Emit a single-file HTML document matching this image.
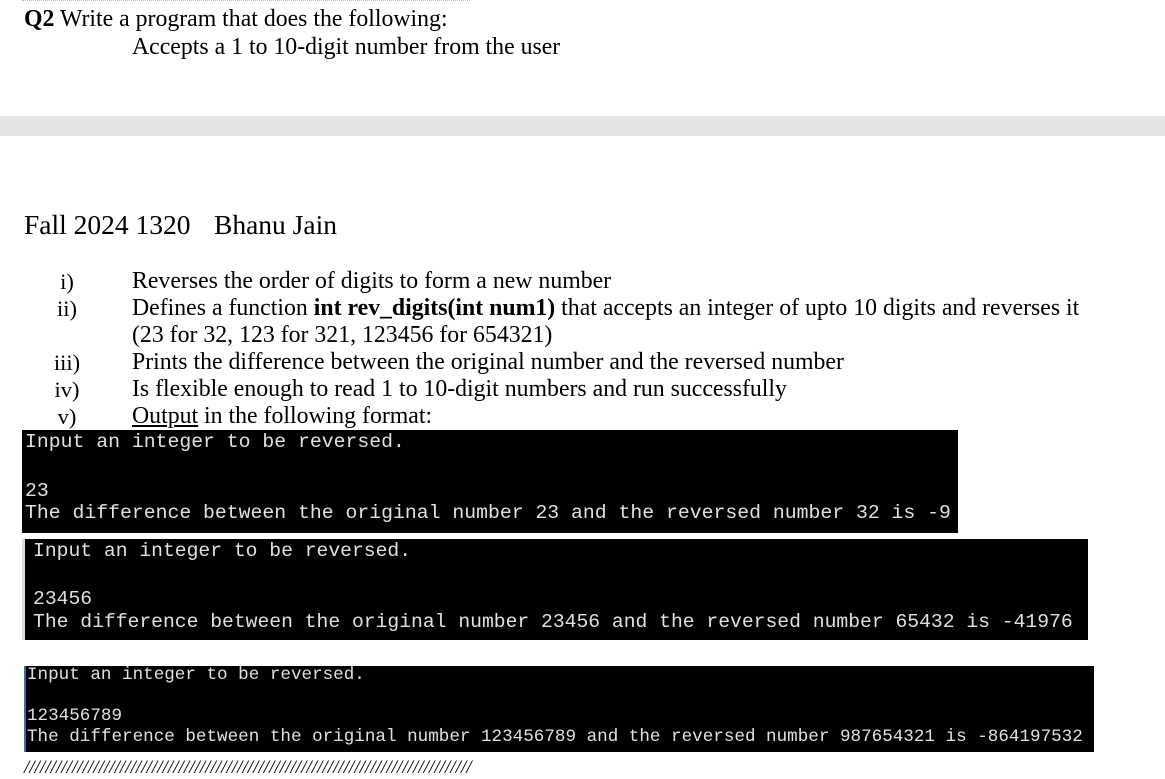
<!DOCTYPE html>
<html><head><meta charset="utf-8">
<style>
body{margin:0;width:1165px;height:779px;background:#fff;position:relative;overflow:hidden;font-family:"Liberation Serif",serif;color:#000}
.t{position:absolute;font-size:23.8px;line-height:23px;white-space:nowrap}
.n{position:absolute;width:40px;left:47px;text-align:center;font-size:22.5px;line-height:23px}
.box{position:absolute;background:#000;color:#e0e0e0;font-family:"Liberation Mono",monospace;white-space:pre}
.box div{position:absolute;left:0;white-space:pre}
</style></head><body>
<div style="position:absolute;left:22px;top:0;width:448px;border-top:1px dotted #bbb"></div>
<div class="t" style="left:24px;top:8px"><b>Q2</b> Write a program that does the following:</div>
<div class="t" style="left:132px;top:36px">Accepts a 1 to 10-digit number from the user</div>
<div style="position:absolute;left:0;top:116px;width:1165px;height:20px;background:#e3e3e3"></div>
<div class="t" style="left:24px;top:211px;font-size:27.5px;line-height:27px">Fall 2024 1320</div>
<div class="t" style="left:214px;top:211px;font-size:27.5px;line-height:27px">Bhanu Jain</div>
<div class="n" style="top:270px">i)</div><div class="t" style="left:132px;top:270px">Reverses the order of digits to form a new number</div>
<div class="n" style="top:297px">ii)</div><div class="t" style="left:132px;top:297px">Defines a function <b>int rev_digits(int num1)</b> that accepts an integer of upto 10 digits and reverses it</div>
<div class="t" style="left:132px;top:324px">(23 for 32, 123 for 321, 123456 for 654321)</div>
<div class="n" style="top:351px">iii)</div><div class="t" style="left:132px;top:351px">Prints the difference between the original number and the reversed number</div>
<div class="n" style="top:378px">iv)</div><div class="t" style="left:132px;top:378px">Is flexible enough to read 1 to 10-digit numbers and run successfully</div>
<div class="n" style="top:405px">v)</div><div class="t" style="left:132px;top:405px"><u>Output</u> in the following format:</div>

<div class="box" style="left:22px;top:430px;width:936px;height:103px;font-size:19.8px;line-height:20px">
<div style="left:3px;top:2px">Input an integer to be reversed.</div>
<div style="left:3px;top:51px">23</div>
<div style="left:3px;top:73px">The difference between the original number 23 and the reversed number 32 is -9</div>
</div>
<div class="box" style="left:22px;top:539px;width:1066px;height:101px;font-size:19.7px;line-height:20px;border-left:3px solid #ddd;box-sizing:border-box">
<div style="left:8px;top:2px">Input an integer to be reversed.</div>
<div style="left:8px;top:50px">23456</div>
<div style="left:8px;top:73px">The difference between the original number 23456 and the reversed number 65432 is -41976</div>
</div>
<div class="box" style="left:24px;top:666px;width:1070px;height:86px;font-size:17.6px;line-height:18px;border-left:2px solid #3a6ea5;box-sizing:border-box">
<div style="left:1px;top:0px">Input an integer to be reversed.</div>
<div style="left:1px;top:41px">123456789</div>
<div style="left:1px;top:62px">The difference between the original number 123456789 and the reversed number 987654321 is -864197532</div>
</div>
<div class="t" style="left:24px;top:756px;font-size:19px;font-style:italic;letter-spacing:0.05px">////////////////////////////////////////////////////////////////////////////////////</div>
</body></html>
